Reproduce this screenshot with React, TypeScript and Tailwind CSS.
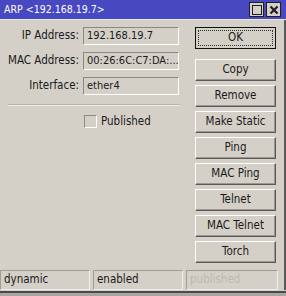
import React from "react";

const buttons = ["Copy", "Remove", "Make Static", "Ping", "MAC Ping", "Telnet", "MAC Telnet", "Torch"];

const fields = [
  { label: "IP Address:", value: "192.168.19.7" },
  { label: "MAC Address:", value: "00:26:6C:C7:DA:..." },
  { label: "Interface:", value: "ether4" },
];

const App = () => {
  return (
    <div className="flex flex-col w-[286px] h-[296px] bg-[#d4d0c8] text-[11.5px] text-[#1a1a1a] font-['DejaVu_Sans_Condensed','DejaVu_Sans',sans-serif] overflow-hidden">
      {/* title bar */}
      <div className="flex items-center h-[20px] bg-[#4848c0] pl-[4px] pr-[5px] text-white text-[10.5px] border-b border-[#e8e6e0]">
        <span className="flex-1">ARP &lt;192.168.19.7&gt;</span>
        <div className="flex items-center gap-[2px]">
          <div className="flex items-center justify-center w-[15px] h-[15px] bg-[#d4d0c8] border border-[#202020]">
            <div className="w-[10px] h-[10px] border-[1.5px] border-[#202020]" />
          </div>
          <div className="flex items-center justify-center w-[15px] h-[15px] bg-[#d4d0c8] border border-[#202020]">
            <svg width="10" height="10" viewBox="0 0 10 10">
              <path d="M1.5 1.5 L8.5 8.5 M8.5 1.5 L1.5 8.5" stroke="#202020" strokeWidth="2.2" />
            </svg>
          </div>
        </div>
      </div>

      <div className="flex flex-row flex-1 border-r-[2px] border-[#5a5a5a]">
        {/* form */}
        <div className="flex flex-col w-[195px] pt-[7px]">
          {fields.map((f, i) => (
            <div key={f.label} className={`flex items-center h-[18px] ${i > 0 ? "mt-[7px]" : ""}`}>
              <span className="w-[79px] text-right whitespace-nowrap">{f.label}</span>
              <div className="ml-[4px] w-[96px] h-[18px] flex items-center pl-[3px] text-[11px] border border-t-[#8a8884] border-l-[#8a8884] border-b-white border-r-white whitespace-nowrap overflow-hidden">
                {f.value}
              </div>
            </div>
          ))}
          <div className="mt-[9px] ml-[8px] w-[172px] border-t border-[#b8b4ac] border-b border-b-[#ecebe6]" />
          <div className="flex items-center mt-[7px] ml-[84px]">
            <div className="w-[13px] h-[13px] border border-t-[#8a8884] border-l-[#8a8884] border-b-white border-r-white" />
            <span className="ml-[4px]">Published</span>
          </div>
        </div>

        {/* buttons */}
        <div className="flex flex-col w-[81px] pt-[7px]">
          <div className="flex items-center justify-center h-[22px] border border-[#101010] bg-[#d4d0c8]">
            <div className="flex items-center justify-center w-[75px] h-[16px] border border-dotted border-[#303030]">OK</div>
          </div>
          <div className="flex flex-col gap-[4px] mt-[10px]">
            {buttons.map((b) => (
              <div
                key={b}
                className="flex items-center justify-center h-[22px] border border-t-white border-l-white border-b-[#5a5a5a] border-r-[#5a5a5a] shadow-[inset_-1px_-1px_0_#9a9690]"
              >
                {b}
              </div>
            ))}
          </div>
        </div>
      </div>

      {/* status bar */}
      <div className="flex flex-row gap-[3px] h-[20px] mb-[1px] pr-[6px] border-r-[2px] border-[#5a5a5a]">
        <div className="flex items-center w-[90px] pl-[3px] border border-t-[#a09c96] border-l-[#a09c96] border-b-[#f0efea] border-r-[#f0efea]">dynamic</div>
        <div className="flex items-center w-[90px] pl-[3px] border border-t-[#a09c96] border-l-[#a09c96] border-b-[#f0efea] border-r-[#f0efea]">enabled</div>
        <div className="flex items-center flex-1 pl-[3px] text-[#bdb9b1] border border-t-[#a09c96] border-l-[#a09c96] border-b-[#f0efea] border-r-[#f0efea]">published</div>
      </div>
      <div className="h-[2px] bg-[#4a4a4a]" />
      <div className="h-[3px] bg-[#a8a6a2]" />
    </div>
  );
};

export default App;
